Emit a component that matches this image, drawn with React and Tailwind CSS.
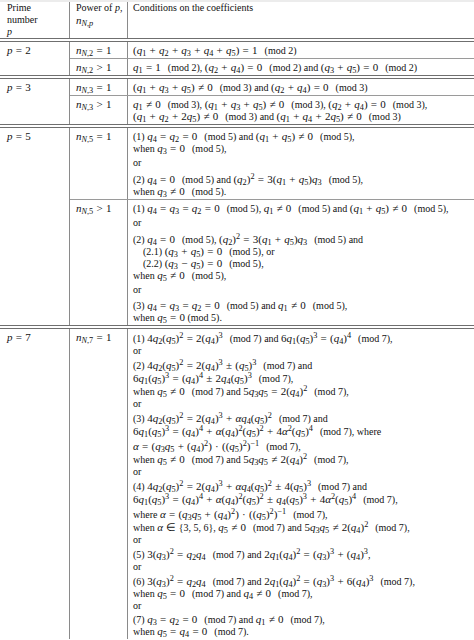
import React from 'react';

// tiny TeX-ish renderer: letters italic, _x / ^x (or _{..} / ^{..}) become sub / sup
function math(s, k = 'm') {
  const out = [];
  let i = 0;
  let n = 0;
  const grab = () => {
    if (s[i] === '{') {
      let d = 1;
      let j = i + 1;
      while (d) {
        if (s[j] === '{') d++;
        else if (s[j] === '}') d--;
        j++;
      }
      const g = s.slice(i + 1, j - 1);
      i = j;
      return g;
    }
    return s[i++];
  };
  while (i < s.length) {
    const c = s[i];
    if (c === '_' || c === '^') {
      i++;
      const g = grab();
      const key = k + '-' + n++;
      out.push(c === '_' ? <sub key={key}>{math(g, key)}</sub> : <sup key={key}>{math(g, key)}</sup>);
    } else if (/[A-Za-zα]/.test(c)) {
      out.push(<i key={k + '-' + n++}>{c}</i>);
      i++;
    } else {
      let j = i;
      while (j < s.length && !/[A-Za-zα_^]/.test(s[j])) j++;
      out.push(s.slice(i, j).replace(/-/g, '−'));
      i = j;
    }
  }
  return out;
}

const M = ({ s, k }) => <span className="text-[11px] [word-spacing:0.5px]">{math(s, k)}</span>;

const line = (s, k) =>
  s.split('$').map((seg, idx) =>
    idx % 2 ? <M key={idx} s={seg} k={k + '.' + idx} /> : seg.replace(/~/g, '\u2002\u2009')
  );

const groups = [
  {
    p: 'p = 2',
    gap: 'gap-[2px]',
    rows: [
      { n: 'n_{N,2} = 1', blocks: [['$(q_1 + q_2 + q_3 + q_4 + q_5) = 1$~(mod 2)']] },
      {
        n: 'n_{N,2} > 1',
        blocks: [['$q_1 = 1$~(mod 2), $(q_2 + q_4) = 0$~(mod 2) and $(q_3 + q_5) = 0$~(mod 2)']],
      },
    ],
  },
  {
    p: 'p = 3',
    gap: 'gap-[2px]',
    rows: [
      { n: 'n_{N,3} = 1', blocks: [['$(q_1 + q_3 + q_5) ≠ 0$~(mod 3) and $(q_2 + q_4) = 0$~(mod 3)']] },
      {
        n: 'n_{N,3} > 1',
        blocks: [
          [
            '$q_1 ≠ 0$~(mod 3), $(q_1 + q_3 + q_5) ≠ 0$~(mod 3), $(q_2 + q_4) = 0$~(mod 3),',
            '$(q_1 + q_2 + 2q_5) ≠ 0$~(mod 3) and $(q_1 + q_4 + 2q_5) ≠ 0$~(mod 3)',
          ],
        ],
      },
    ],
  },
  {
    p: 'p = 5',
    gap: 'gap-[3px]',
    rows: [
      {
        n: 'n_{N,5} = 1',
        blocks: [
          ['(1) $q_4 = q_2 = 0$~(mod 5) and $(q_1 + q_5) ≠ 0$~(mod 5),', 'when $q_3 = 0$~(mod 5),'],
          ['or'],
          ['(2) $q_4 = 0$~(mod 5) and $(q_2)^2 = 3(q_1 + q_5)q_3$~(mod 5),', 'when $q_3 ≠ 0$~(mod 5).'],
        ],
      },
      {
        n: 'n_{N,5} > 1',
        blocks: [
          ['(1) $q_4 = q_3 = q_2 = 0$~(mod 5), $q_1 ≠ 0$~(mod 5) and $(q_1 + q_5) ≠ 0$~(mod 5),'],
          ['or'],
          [
            '(2) $q_4 = 0$~(mod 5), $(q_2)^2 = 3(q_1 + q_5)q_3$~(mod 5) and',
            '>(2.1) $(q_3 + q_5) = 0$~(mod 5), or',
            '>(2.2) $(q_3 - q_5) = 0$~(mod 5),',
            'when $q_5 ≠ 0$~(mod 5),',
          ],
          ['or'],
          ['(3) $q_4 = q_3 = q_2 = 0$~(mod 5) and $q_1 ≠ 0$~(mod 5),', 'when $q_5 = 0$ (mod 5).'],
        ],
      },
    ],
  },
  {
    p: 'p = 7',
    gap: 'gap-[1px]',
    rows: [
      {
        n: 'n_{N,7} = 1',
        blocks: [
          ['(1) $4q_2(q_5)^2 = 2(q_4)^3$~(mod 7) and $6q_1(q_5)^3 = (q_4)^4$~(mod 7),'],
          ['or'],
          [
            '(2) $4q_2(q_5)^2 = 2(q_4)^3 ± (q_5)^3$~(mod 7) and',
            '$6q_1(q_5)^3 = (q_4)^4 ± 2q_4(q_5)^3$~(mod 7),',
            'when $q_5 ≠ 0$~(mod 7) and $5q_3q_5 = 2(q_4)^2$~(mod 7),',
          ],
          ['or'],
          [
            '(3) $4q_2(q_5)^2 = 2(q_4)^3 + αq_4(q_5)^2$~(mod 7) and',
            '$6q_1(q_5)^3 = (q_4)^4 + α(q_4)^2(q_5)^2 + 4α^2(q_5)^4$~(mod 7), where',
            '$α = (q_3q_5 + (q_4)^2) · ((q_5)^2)^{-1}$~(mod 7),',
            'when $q_5 ≠ 0$~(mod 7) and $5q_3q_5 ≠ 2(q_4)^2$~(mod 7),',
          ],
          ['or'],
          [
            '(4) $4q_2(q_5)^2 = 2(q_4)^3 + αq_4(q_5)^2 ± 4(q_5)^3$~(mod 7) and',
            '$6q_1(q_5)^3 = (q_4)^4 + α(q_4)^2(q_5)^2 ± q_4(q_5)^3 + 4α^2(q_5)^4$~(mod 7),',
            'where $α = (q_3q_5 + (q_4)^2) · ((q_5)^2)^{-1}$~(mod 7),',
            'when $α ∈$ {3, 5, 6}, $q_5 ≠ 0$~(mod 7) and $5q_3q_5 ≠ 2(q_4)^2$~(mod 7),',
          ],
          ['or'],
          ['(5) $3(q_3)^2 = q_2q_4$~(mod 7) and $2q_1(q_4)^2 = (q_3)^3 + (q_4)^3$,'],
          ['or'],
          [
            '(6) $3(q_3)^2 = q_2q_4$~(mod 7) and $2q_1(q_4)^2 = (q_3)^3 + 6(q_4)^3$~(mod 7),',
            'when $q_5 = 0$~(mod 7) and $q_4 ≠ 0$~(mod 7),',
          ],
          ['or'],
          ['(7) $q_3 = q_2 = 0$~(mod 7) and $q_1 ≠ 0$~(mod 7),', 'when $q_5 = q_4 = 0$~(mod 7).'],
        ],
      },
    ],
  },
];

// line height depends on how high the superscripts climb
const lineClass = (l) => {
  if (l.includes('^{-1}')) return 'h-[15px] pt-[3px]';
  if (l.includes('^')) return 'h-[13px] pt-[1px]';
  return 'h-[12px]';
};

const Blocks = ({ blocks, id, gap }) => (
  <div className={`flex flex-col ${gap}`}>
    {blocks.map((b, bi) => (
      <div key={bi}>
        {b.map((l, li) => {
          const indent = l.startsWith('>');
          return (
            <div key={li} className={`whitespace-nowrap ${lineClass(l)} ${indent ? 'pl-[10px]' : ''}`}>
              {line(indent ? l.slice(1) : l, `${id}-${bi}-${li}`)}
            </div>
          );
        })}
      </div>
    ))}
  </div>
);

export default function App() {
  return (
    <div
      className="w-[474px] h-[640px] overflow-hidden bg-white text-[#111] text-[10px] leading-[12px] border-t-2 border-[#ececec]"
      style={{ fontFamily: '"Liberation Serif", "Times New Roman", serif' }}
    >
      <div className="flex">
        <div className="w-[70px] shrink-0 border-r border-[#8a8a8a] pl-[7px]">
          <div className="h-[12px]">Prime</div>
          <div className="h-[12px]">number</div>
          <div className="h-[12px]">
            <i>p</i>
          </div>
        </div>
        <div className="w-[58px] shrink-0 border-r border-[#8a8a8a] pl-[6px]">
          <div className="h-[12px]">
            Power of <i>p</i>,
          </div>
          <div className="h-[12px]">
            <M s="n_{N,p}" k="h" />
          </div>
        </div>
        <div className="flex-1 pl-[5px]">Conditions on the coefficients</div>
      </div>

      {groups.map((g, gi) => (
        <div key={gi}>
          <div className="h-[4px] border-y border-[#6f6f6f]" />
          <div className="flex">
            <div className="w-[70px] shrink-0 border-r border-[#8a8a8a] pl-[7px] py-[2px]">
              <div className="h-[12px]">
                <M s={g.p} k={'p' + gi} />
              </div>
            </div>
            <div className="flex-1 flex flex-col">
              {g.rows.map((r, ri) => (
                <div key={ri} className={ri ? 'flex border-t border-[#9a9a9a]' : 'flex'}>
                  <div className="w-[58px] shrink-0 border-r border-[#8a8a8a] pl-[6px] py-[2px]">
                    <div className="h-[12px]">
                      <M s={r.n} k={`n${gi}${ri}`} />
                    </div>
                  </div>
                  <div className="flex-1 pl-[5px] py-[2px]">
                    <Blocks blocks={r.blocks} id={`${gi}${ri}`} gap={g.gap} />
                  </div>
                </div>
              ))}
            </div>
          </div>
        </div>
      ))}
    </div>
  );
}
